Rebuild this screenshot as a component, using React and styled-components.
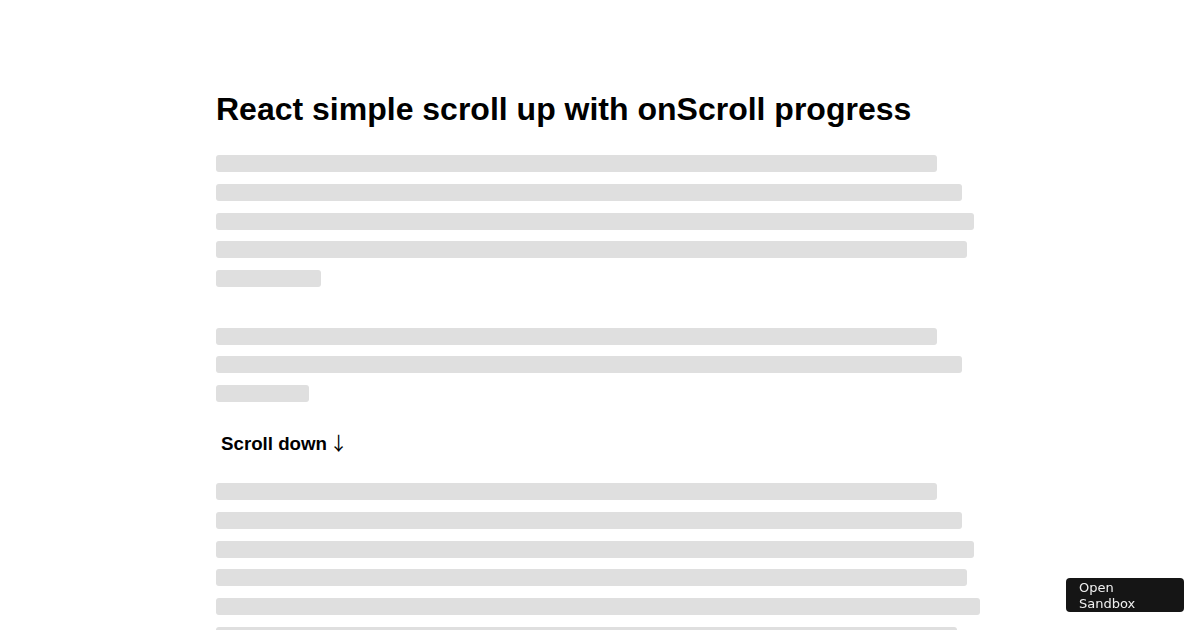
import React from "react";
import styled, { createGlobalStyle } from "styled-components";

const Global = createGlobalStyle`
  html, body { margin: 0; padding: 0; background: #fff; }
  body { font-family: "Liberation Sans", Arial, sans-serif; color: #000; overflow: hidden; }
`;

const Page = styled.main`
  width: 768px;
  margin: 0 auto;
  padding-top: 91px;
  display: flex;
  flex-direction: column;
`;

const Title = styled.h1`
  margin: 0 0 27px;
  font-size: 32px;
  font-weight: 700;
  line-height: normal;
`;

const Paragraph = styled.section`
  display: flex;
  flex-direction: column;
  gap: 11.75px;
  margin-bottom: ${(p) => p.$after}px;
`;

const Bar = styled.div`
  height: 17px;
  width: ${(p) => p.$w}px;
  background: #dfdfdf;
  border-radius: 3px;
`;

const SubHeading = styled.h3`
  margin: 0 0 28.5px;
  padding: 1px 0 0 5px;
  font-size: 18.72px;
  font-weight: 700;
  line-height: 21.5px;
`;

const Arrow = styled.span`
  font-family: "Noto Sans CJK JP", "Noto Sans CJK SC", sans-serif;
  font-weight: 400;
  line-height: 0;
  margin-left: -3px;
  color: #000;
`;

const SandboxButton = styled.a`
  position: fixed;
  right: 16px;
  bottom: 18px;
  box-sizing: border-box;
  width: 118px;
  padding: 2px 13px 0;
  background: #151515;
  color: #f0f0f0;
  border-radius: 4px;
  font-family: "DejaVu Sans", Verdana, sans-serif;
  font-size: 13px;
  line-height: 16px;
  text-decoration: none;
`;

const p1 = [721, 746, 758, 751, 105];
const p2 = [721, 746, 93];
const p3 = [721, 746, 758, 751, 764, 741];

export default function App() {
  return (
    <>
      <Global />
      <Page>
        <Title>React simple scroll up with onScroll progress</Title>
        <Paragraph $after={40.5}>
          {p1.map((w, i) => (
            <Bar key={i} $w={w} />
          ))}
        </Paragraph>
        <Paragraph $after={30}>
          {p2.map((w, i) => (
            <Bar key={i} $w={w} />
          ))}
        </Paragraph>
        <SubHeading>
          Scroll down <Arrow>↓</Arrow>
        </SubHeading>
        <Paragraph $after={0}>
          {p3.map((w, i) => (
            <Bar key={i} $w={w} />
          ))}
        </Paragraph>
      </Page>
      <SandboxButton href="#">Open Sandbox</SandboxButton>
    </>
  );
}
